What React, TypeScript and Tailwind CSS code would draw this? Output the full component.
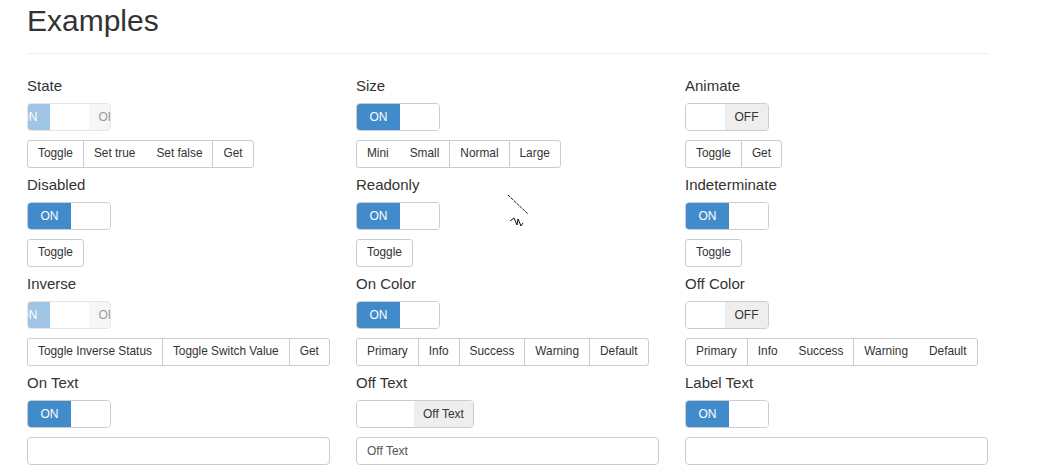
import React from "react";

type Btn = { t: string; sep?: boolean };

// Bootstrap-switch style toggle, track shifted to show the current state
const Switch: React.FC<{
  outer: string;
  shift: string;
  handle: string;
  label: string;
  onText?: string;
  offText?: string;
  dim?: boolean;
}> = ({ outer, shift, handle, label, onText = "ON", offText = "OFF", dim }) => (
  <div
    className={`${outer} h-[28px] border border-[#ccc] rounded-[4px] overflow-hidden bg-white ${dim ? "opacity-50" : ""}`}
  >
    <div className={`flex h-full ${shift}`}>
      <span className={`${handle} shrink-0 h-full bg-[#428bca] text-white flex items-center justify-center text-[12px]`}>
        {onText}
      </span>
      <span className={`${label} shrink-0 h-full bg-white`} />
      <span className={`${handle} shrink-0 h-full bg-[#eeeeee] text-[#333] flex items-center justify-center text-[12px]`}>
        {offText}
      </span>
    </div>
  </div>
);

const OnSwitch = () => <Switch outer="w-[84px]" shift="" handle="w-[43px]" label="w-[39px]" />;
const OffSwitch = () => <Switch outer="w-[84px]" shift="-ml-[43px]" handle="w-[43px]" label="w-[39px]" />;
const MidSwitch = () => <Switch outer="w-[84px]" shift="-ml-[21px]" handle="w-[43px]" label="w-[39px]" dim />;

const Group: React.FC<{ items: Btn[] }> = ({ items }) => (
  <div className="inline-flex h-[28px] border border-[#ccc] rounded-[3px] bg-white">
    {items.map((b, i) => (
      <span
        key={b.t}
        className={`px-[10px] flex items-center text-[11.85px] text-[#333] whitespace-nowrap ${
          i === 0 ? "" : b.sep === false ? "border-l border-transparent" : "border-l border-[#ccc]"
        }`}
      >
        {b.t}
      </span>
    ))}
  </div>
);

const Input: React.FC<{ value?: string }> = ({ value }) => (
  <div className="w-full h-[28px] border border-[#ccc] rounded-[4px] px-[10px] flex items-center text-[12px] text-[#555]">
    {value}
  </div>
);

const Cell: React.FC<{ title: string; sw: React.ReactNode; children: React.ReactNode }> = ({
  title,
  sw,
  children,
}) => (
  <div className="h-[99px]">
    <div className="h-[34px] pt-[7px] text-[15px] leading-[20px] text-[#333]">{title}</div>
    {sw}
    <div className="mt-[9px]">{children}</div>
  </div>
);

export default function App() {
  return (
    <div
      className="relative w-[1060px] h-[476px] overflow-hidden bg-white text-[#333]"
      style={{ fontFamily: '"Liberation Sans", Arial, sans-serif' }}
    >
      <div className="ml-[27px] w-[962px]">
        <h1 className="pt-[3px] text-[30px] leading-[36px] font-normal">Examples</h1>
        <div className="mt-[14px] h-px bg-[#eeeeee]" />

        <div className="mt-[15px] grid grid-cols-[303px_303px_303px] gap-x-[26px]">
          <Cell title="State" sw={<MidSwitch />}>
            <Group items={[{ t: "Toggle" }, { t: "Set true" }, { t: "Set false", sep: false }, { t: "Get" }]} />
          </Cell>
          <Cell title="Size" sw={<OnSwitch />}>
            <Group items={[{ t: "Mini" }, { t: "Small", sep: false }, { t: "Normal" }, { t: "Large" }]} />
          </Cell>
          <Cell title="Animate" sw={<OffSwitch />}>
            <Group items={[{ t: "Toggle" }, { t: "Get" }]} />
          </Cell>

          <Cell title="Disabled" sw={<OnSwitch />}>
            <Group items={[{ t: "Toggle" }]} />
          </Cell>
          <Cell title="Readonly" sw={<OnSwitch />}>
            <Group items={[{ t: "Toggle" }]} />
          </Cell>
          <Cell title="Indeterminate" sw={<OnSwitch />}>
            <Group items={[{ t: "Toggle" }]} />
          </Cell>

          <Cell title="Inverse" sw={<MidSwitch />}>
            <Group items={[{ t: "Toggle Inverse Status" }, { t: "Toggle Switch Value" }, { t: "Get" }]} />
          </Cell>
          <Cell title="On Color" sw={<OnSwitch />}>
            <Group
              items={[{ t: "Primary" }, { t: "Info" }, { t: "Success" }, { t: "Warning" }, { t: "Default" }]}
            />
          </Cell>
          <Cell title="Off Color" sw={<OffSwitch />}>
            <Group
              items={[
                { t: "Primary" },
                { t: "Info" },
                { t: "Success", sep: false },
                { t: "Warning" },
                { t: "Default", sep: false },
              ]}
            />
          </Cell>

          <Cell title="On Text" sw={<OnSwitch />}>
            <Input />
          </Cell>
          <Cell
            title="Off Text"
            sw={
              <Switch
                outer="w-[118px]"
                shift="-ml-[59px]"
                handle="w-[59px]"
                label="w-[57px]"
                onText="ON"
                offText="Off Text"
              />
            }
          >
            <Input value="Off Text" />
          </Cell>
          <Cell title="Label Text" sw={<OnSwitch />}>
            <Input />
          </Cell>
        </div>
      </div>

      {/* stray cursor trail captured in the screenshot */}
      <svg className="absolute left-[505px] top-[192px]" width="26" height="36" viewBox="0 0 26 36">
        <line x1="3" y1="3" x2="23" y2="22" stroke="#111" strokeWidth="1" strokeDasharray="3 1" />
        <polyline points="5,29 9,26 12,33 13,27 16,34 18,31" fill="none" stroke="#111" strokeWidth="1" />
      </svg>
    </div>
  );
}
